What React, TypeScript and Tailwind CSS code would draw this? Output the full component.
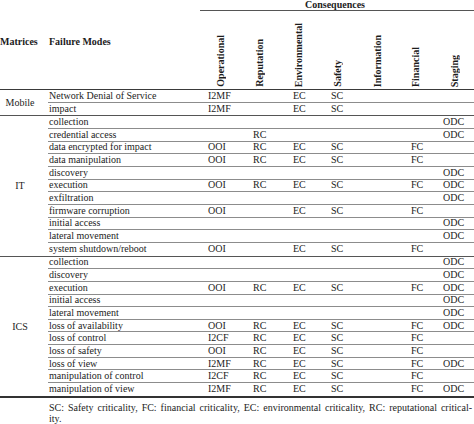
import React from 'react';

type Row = { mode: string; values: string[] };
type Group = { name: string; rows: Row[] };

const headers = ['Operational', 'Reputation', 'Environmental', 'Safety', 'Information', 'Financial', 'Staging'];
const headerWidths = ['w-[38px]', 'w-[39px]', 'w-[39px]', 'w-[40px]', 'w-[39px]', 'w-[38px]', 'w-[39px]'];
const valueWidths = ['w-[45px]', 'w-[40px]', 'w-[38px]', 'w-[40px]', 'w-[40px]', 'w-[32px]', 'w-[31px]'];

const all = ['OOI', 'RC', 'EC', 'SC', '', 'FC', ''];
const allOdc = ['OOI', 'RC', 'EC', 'SC', '', 'FC', 'ODC'];
const odc = ['', '', '', '', '', '', 'ODC'];

const groups: Group[] = [
  {
    name: 'Mobile',
    rows: [
      { mode: 'Network Denial of Service', values: ['I2MF', '', 'EC', 'SC', '', '', ''] },
      { mode: 'impact', values: ['I2MF', '', 'EC', 'SC', '', '', ''] },
    ],
  },
  {
    name: 'IT',
    rows: [
      { mode: 'collection', values: odc },
      { mode: 'credential access', values: ['', 'RC', '', '', '', '', 'ODC'] },
      { mode: 'data encrypted for impact', values: all },
      { mode: 'data manipulation', values: all },
      { mode: 'discovery', values: odc },
      { mode: 'execution', values: allOdc },
      { mode: 'exfiltration', values: odc },
      { mode: 'firmware corruption', values: ['OOI', '', 'EC', 'SC', '', 'FC', ''] },
      { mode: 'initial access', values: odc },
      { mode: 'lateral movement', values: odc },
      { mode: 'system shutdown/reboot', values: ['OOI', '', 'EC', 'SC', '', 'FC', ''] },
    ],
  },
  {
    name: 'ICS',
    rows: [
      { mode: 'collection', values: odc },
      { mode: 'discovery', values: odc },
      { mode: 'execution', values: allOdc },
      { mode: 'initial access', values: odc },
      { mode: 'lateral movement', values: odc },
      { mode: 'loss of availability', values: allOdc },
      { mode: 'loss of control', values: ['I2CF', 'RC', 'EC', 'SC', '', 'FC', ''] },
      { mode: 'loss of safety', values: all },
      { mode: 'loss of view', values: ['I2MF', 'RC', 'EC', 'SC', '', 'FC', 'ODC'] },
      { mode: 'manipulation of control', values: ['I2CF', 'RC', 'EC', 'SC', '', 'FC', ''] },
      { mode: 'manipulation of view', values: ['I2MF', 'RC', 'EC', 'SC', '', 'FC', 'ODC'] },
    ],
  },
];

const App: React.FC = () => {
  return (
    <div className="w-[474px] h-[424px] overflow-hidden bg-white text-[#1c1c1c] font-['Liberation_Serif',serif]">
      {/* header */}
      <div className="flex h-[90px] border-b border-[#3a3a3a]">
        <div className="w-[48px] pt-[37px] text-[10px] font-bold leading-none">Matrices</div>
        <div className="w-[152px] pt-[37px] pl-[1px] text-[10px] font-bold leading-none">Failure Modes</div>
        <div className="flex flex-col w-[274px]">
          <div className="h-[11px] border-b border-[#555] pr-[4px] text-center text-[10px] font-bold leading-[9px]">
            Consequences
          </div>
          <div className="flex flex-1 pl-[2px]">
            {headers.map((h, i) => (
              <div key={h} className={`${headerWidths[i]} flex items-end justify-center pb-[2px]`}>
                <span className="[writing-mode:vertical-rl] rotate-180 text-[10px] font-bold leading-none">{h}</span>
              </div>
            ))}
          </div>
        </div>
      </div>

      {/* body */}
      {groups.map((g, gi) => (
        <div
          key={g.name}
          className={`flex ${gi === groups.length - 1 ? 'border-b-2 border-[#333]' : 'border-b border-[#555]'}`}
        >
          <div className="w-[48px] flex items-center">
            <span className="w-[40px] text-center text-[10px]">{g.name}</span>
          </div>
          <div className="flex-1">
            {g.rows.map((r, ri) => (
              <div
                key={r.mode}
                className={`flex items-center h-[12.67px] text-[10px] leading-none ${
                  ri < g.rows.length - 1 ? 'border-b border-[#8c8c8c]' : ''
                }`}
              >
                <div className="w-[160px] pl-[1px]">{r.mode}</div>
                {r.values.map((v, vi) => (
                  <div key={vi} className={valueWidths[vi]}>
                    {v}
                  </div>
                ))}
              </div>
            ))}
          </div>
        </div>
      ))}

      {/* footnote */}
      <div className="pl-[49px] pt-[4px] text-[10px] leading-[11px]">
        <div className="w-[423px] text-justify [text-align-last:justify]">
          SC: Safety criticality, FC: financial criticality, EC: environmental criticality, RC: reputational critical-
        </div>
        <div>ity.</div>
      </div>
    </div>
  );
};

export default App;
